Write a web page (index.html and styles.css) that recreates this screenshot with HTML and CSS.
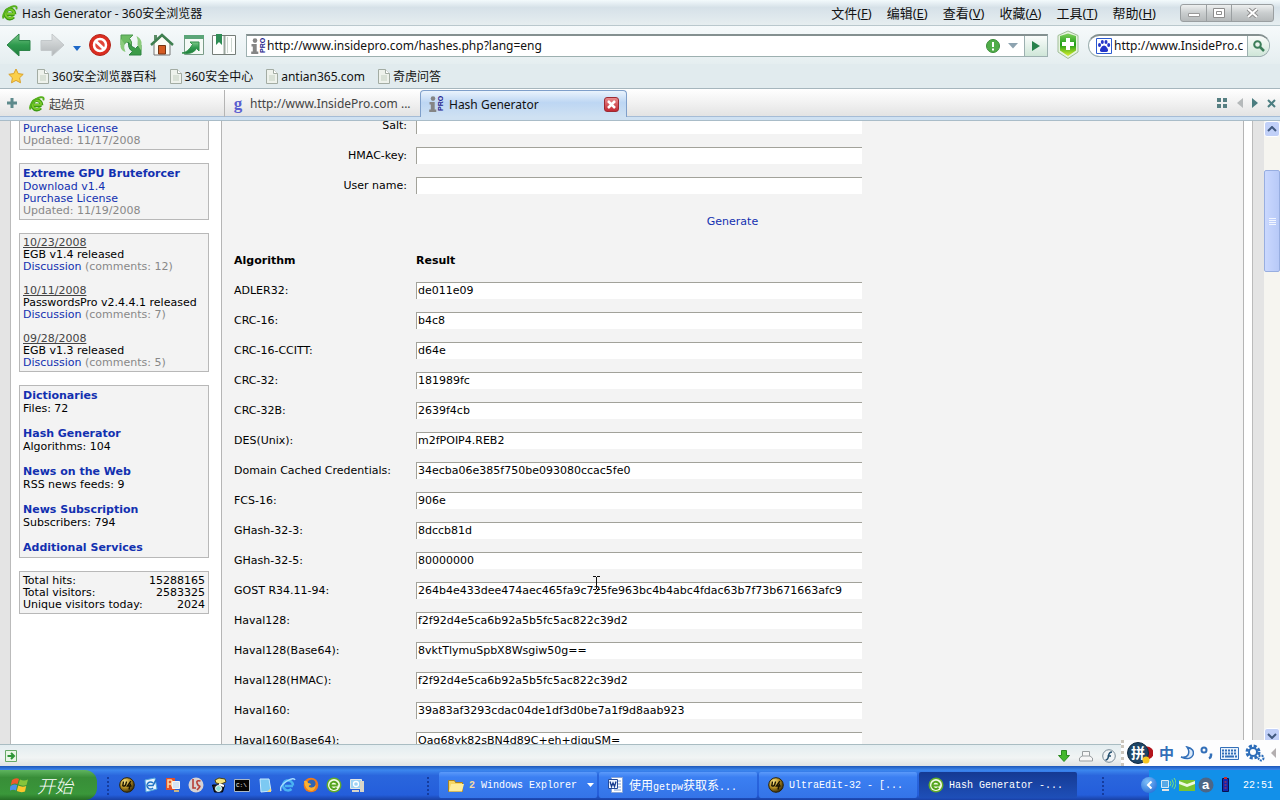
FILE: index.html
```html
<!DOCTYPE html>
<html lang="zh-CN">
  <head>
    <meta charset="utf-8">
    <title>Hash Generator - 360安全浏览器</title>
    <meta name="viewport" content="width=device-width, initial-scale=1.0">
    <link rel="stylesheet" href="styles.css">
  </head>
  <body>
    <!-- shared icons -->
    <svg class="defs" aria-hidden="true">
      <defs>
        <linearGradient id="green" x1="0" y1="0" x2="0" y2="1">
          <stop offset="0" stop-color="#7cc98a"/><stop offset=".5" stop-color="#2f9a4e"/><stop offset="1" stop-color="#1f7e3c"/>
        </linearGradient>
        <linearGradient id="silver" x1="0" y1="0" x2="0" y2="1">
          <stop offset="0" stop-color="#e2e5e6"/><stop offset="1" stop-color="#b0b5b7"/>
        </linearGradient>
        <linearGradient id="shieldFill" x1="0" y1="0" x2="0" y2="1">
          <stop offset="0" stop-color="#7fcf5a"/><stop offset=".5" stop-color="#1e9c17"/><stop offset="1" stop-color="#d9f02c"/>
        </linearGradient>
        <radialGradient id="gold" cx=".35" cy=".3" r=".8">
          <stop offset="0" stop-color="#ffe98a"/><stop offset=".5" stop-color="#b08a20"/><stop offset="1" stop-color="#1c1606"/>
        </radialGradient>
        <symbol id="browser" viewBox="0 0 16 16">
          <path d="M12.6 9.2H4.8M12.6 9.2A4.7 4.7 0 1 0 11.6 11.8" fill="none" stroke="#3d9a12" stroke-width="3.6"/>
          <path d="M12.6 8.9H4.8M12.3 8.6A4.4 4.4 0 1 0 11.3 11.6" fill="none" stroke="#7ccb2c" stroke-width="1.8"/>
          <path d="M1.6 13.6C-.6 10 5 2.6 11.6 1.3c2.8-.5 3.6 1 2.6 3" fill="none" stroke="#56b01c" stroke-width="1.9"/>
        </symbol>
        <symbol id="page" viewBox="0 0 12 15">
          <path d="M.5.5h7l4 4v10H.5z" fill="#eef2ec" stroke="#a3aca3"/>
          <path d="M7.5.5v4h4" fill="#fff" stroke="#a3aca3"/>
          <path d="M3 7h6M3 9h6M3 11h6" stroke="#c3cfc0"/>
        </symbol>
        <symbol id="pro" viewBox="0 0 17 16">
          <circle cx="5" cy="2.6" r="2.3" fill="#858585"/>
          <path d="M1.5 6h5.2v7.5h1.6V16H1.2v-2.5h1.6v-5H1.5z" fill="#858585"/>
          <text x="-15" y="15" transform="rotate(-90)" font-family="Liberation Sans" font-size="7" font-weight="bold" fill="#22228c">PRO</text>
        </symbol>
        <symbol id="ultra" viewBox="0 0 16 16">
          <circle cx="8" cy="8" r="7.3" fill="url(#gold)" stroke="#2a2208"/>
          <path d="M4.5 4.5 3.8 8.6q1.6 1.2 2.8-.6L7.6 4.5M11.8 4.2 8.4 9h4.2M11.6 6.5l-1.6 6" fill="none" stroke="#191300" stroke-width="1.4"/>
        </symbol>
        <symbol id="roundBrowser" viewBox="0 0 16 16">
          <circle cx="8" cy="8" r="7.5" fill="#62ab2a"/><circle cx="8" cy="8" r="6" fill="#f5fbe9"/>
          <path d="M11.6 8.6H5M11.5 8.3a3.6 3.6 0 1 0-.9 2.4" fill="none" stroke="#56a51f" stroke-width="2"/>
        </symbol>
      </defs>
    </svg>

    <header class="titleBar">
      <svg class="icon16"><use href="#browser"/></svg>
      <h1>Hash Generator - 360安全浏览器</h1>
      <nav class="menu">
        <button>文件(<u>F</u>)</button>
        <button>编辑(<u>E</u>)</button>
        <button>查看(<u>V</u>)</button>
        <button>收藏(<u>A</u>)</button>
        <button>工具(<u>T</u>)</button>
        <button>帮助(<u>H</u>)</button>
      </nav>
      <div class="windowButtons">
        <button aria-label="Minimize"><svg width="12" height="10"><path d="M.5 5.5h11v3H.5z" fill="#fff" stroke="#999"/></svg></button>
        <button aria-label="Restore"><svg width="12" height="10"><path d="M.5.5h11v9H.5zM3.5 3.5h5v3h-5z" fill="#fff" stroke="#8d8d8d"/></svg></button>
        <button class="closeWindow" aria-label="Close"><svg width="13" height="10"><path d="m2 1 9 8M11 1 2 9" stroke="#909090" stroke-width="4"/><path d="m2 1 9 8M11 1 2 9" stroke="#fff" stroke-width="2"/></svg></button>
      </div>
    </header>

    <div class="toolBar">
      <div class="navButtons">
        <button aria-label="Back"><svg width="26" height="24"><path d="M1 12 13 1v6.500h11v10H13V23z" fill="url(#green)" stroke="#2c8448"/></svg></button>
        <button aria-label="Forward"><svg width="26" height="24"><path d="M25 12 13 1v6.500H2v10h11V23z" fill="url(#silver)" stroke="#c3c8ca"/></svg></button>
        <button class="history" aria-label="History"><svg width="8" height="6"><path d="M0 0h8L4 5z" fill="#1d68c8"/></svg></button>
        <button aria-label="Stop"><svg width="24" height="24"><circle cx="12" cy="12" r="10.500" fill="#dc2d20" stroke="#b3261b"/><circle cx="12" cy="12" r="6" fill="#e2463a" stroke="#fff" stroke-width="2.500"/><path d="m7.500 8 9 8.500" stroke="#fff" stroke-width="3"/></svg></button>
        <button aria-label="Refresh"><svg width="24" height="24"><path d="M2 2h12l-3.500 3.500Q13.500 8 12.500 14 10.500 9.500 7.500 9L4 12.500 2 12z" fill="#6bbb62" stroke="#4c9a50"/><path d="M22 22H10l3.500-3.500Q9 16 9.500 9.500 12 14 16.500 15.500L20 12h2z" fill="#3c9c48" stroke="#2c8440"/><path d="M1.500 5v9q1 4 5 5Q4.500 15 5.500 11zM22.500 18V9q-1-4-5-6 2 4 1 9z" fill="#8bcb7c"/></svg></button>
        <button aria-label="Home"><svg width="24" height="24"><path d="M4 10 12 3l8 7v12H4z" fill="#fbfbf5" stroke="#777"/><path d="M4 2h3v5H4z" fill="#5b8c66"/><path d="m1 12 11-10 11 10" fill="none" stroke="#3f7f50" stroke-width="2.500"/><path d="M8.500 12.500h7V21h-7z" fill="#d55b22" stroke="#743514"/></svg></button>
        <button aria-label="Reopen tab"><svg width="24" height="24"><path d="M3.500 2.500h19v19h-19z" fill="#f4f9f5" stroke="#7a9c88"/><path d="M3 2h20v4H3z" fill="#5ba578"/><path d="M9 9h9v9l-2.500-2.500Q12 22 1 20q6-.5 10.500-8.500z" fill="url(#green)" stroke="#2f8f49"/></svg></button>
        <button aria-label="Favorites"><svg width="24" height="24"><path d="M.5 2.500h23v19H.5z" fill="#fdfefd" stroke="#757d78"/><path d="M12.500 3v18" stroke="#9aa69e" stroke-width="2"/><path d="M4 1h6v11L7 9l-3 3z" fill="#2e8c55"/><path d="M15.500 4v16M19.500 5v14" stroke="#ccd6cf"/></svg></button>
      </div>
      <form class="addressBar">
        <svg class="iconPro"><use href="#pro"/></svg>
        <input type="text" aria-label="Address" value="http://www.insidepro.com/hashes.php?lang=eng">
        <svg width="16" height="16"><circle cx="8" cy="8" r="6.500" fill="#50ad48" stroke="#3b8d3a"/><path d="M8 4v5M8 10.500v2" stroke="#fff" stroke-width="2"/></svg>
        <button type="button" class="dropArrow" aria-label="Address list"><svg width="10" height="6"><path d="M0 0h10L5 5.500z" fill="#8da3b0"/></svg></button>
        <button type="button" class="goButton" aria-label="Go"><svg width="8" height="10"><path d="M0 0v10l8-5z" fill="#26814a"/></svg></button>
      </form>
      <button class="shield" aria-label="Security"><svg width="24" height="30"><path d="M12 1 22 5.500V22L12 28.500 2 22V5.500z" fill="#e7f4df" stroke="#a0bd98"/><path d="M12 3.500 20 6v14.500L12 26l-8-5.500V6z" fill="url(#shieldFill)"/><path d="M12 8v12M6 14h12" stroke="#fff" stroke-width="4"/></svg></button>
      <form class="searchBar">
        <svg width="16" height="16"><path d="M.5.5h15v15H.5z" fill="#fff" stroke="#2b5ad0"/><g fill="#2536c9"><ellipse cx="3.500" cy="7" rx="1.500" ry="2"/><ellipse cx="6.300" cy="4" rx="1.500" ry="2"/><ellipse cx="10" cy="4" rx="1.500" ry="2"/><ellipse cx="12.700" cy="7" rx="1.500" ry="2"/><path d="M8 7.500q2 0 3.500 3 1.500 3-1 3.500H5.500q-2.500-.5-1-3.500 1.500-3 3.500-3z"/></g></svg>
        <input type="text" aria-label="Search" value="http://www.InsidePro.com">
        <button type="button" aria-label="Search"><svg width="12" height="12"><circle cx="4.500" cy="4.500" r="3.300" fill="none" stroke="#3b7d58" stroke-width="2"/><path d="m7 7 4 4" stroke="#3b7d58" stroke-width="2.500"/></svg></button>
      </form>
    </div>

    <nav class="bookmarks">
      <svg class="icon16" viewBox="0 0 16 16"><path d="m8 1 2.200 4.600 5 .7-3.600 3.500.9 5L8 12.400l-4.500 2.400.9-5L.8 6.300l5-.7z" fill="#fbd04a" stroke="#d9a12c"/></svg>
      <a href="#"><svg class="page"><use href="#page"/></svg>360安全浏览器百科</a>
      <a href="#"><svg class="page"><use href="#page"/></svg>360安全中心</a>
      <a href="#"><svg class="page"><use href="#page"/></svg>antian365.com</a>
      <a href="#"><svg class="page"><use href="#page"/></svg>奇虎问答</a>
    </nav>

    <div class="tabStrip">
      <button class="newTab" aria-label="New tab"><svg width="12" height="12"><path d="M6 1v10M1 6h10" stroke="#5e8a8c" stroke-width="3"/></svg></button>
      <a href="#" class="tab"><svg class="icon16"><use href="#browser"/></svg><span>起始页</span></a>
      <a href="#" class="tab"><b class="google">g</b><span>http://www.InsidePro.com ...</span></a>
      <div class="tab activeTab">
        <svg class="iconPro"><use href="#pro"/></svg><span>Hash Generator</span>
        <button class="closeTab" aria-label="Close tab"><svg width="9" height="9"><path d="m1 1 7 7M8 1 1 8" stroke="#fff" stroke-width="2.500"/></svg></button>
      </div>
      <div class="tabTools">
        <button aria-label="Tab list"><svg width="11" height="10"><path d="M0 0h4v4H0zM6 0h4v4H6zM0 6h4v4H0zM6 6h4v4H6z" fill="#567f82"/></svg></button>
        <button aria-label="Scroll left"><svg width="6" height="10"><path d="M6 0v10L0 5z" fill="#b5b9ba"/></svg></button>
        <button aria-label="Scroll right"><svg width="6" height="10"><path d="M0 0v10l6-5z" fill="#4b7d80"/></svg></button>
        <button aria-label="Close current"><svg width="9" height="9"><path d="m1 1 7 7M8 1 1 8" stroke="#4b7d80" stroke-width="2"/></svg></button>
      </div>
    </div>

    <div class="viewport">
      <div class="site">
        <aside class="sideBar">
          <div class="box">
            <a href="#">Purchase License</a>
            <p class="muted">Updated: 11/17/2008</p>
          </div>
          <div class="box">
            <h2><a href="#">Extreme GPU Bruteforcer</a></h2>
            <a href="#">Download v1.4</a>
            <a href="#">Purchase License</a>
            <p class="muted">Updated: 11/19/2008</p>
          </div>
          <div class="box news">
            <div><u>10/23/2008</u><p>EGB v1.4 released</p><p class="muted"><a href="#">Discussion</a> (comments: 12)</p></div>
            <div><u>10/11/2008</u><p>PasswordsPro v2.4.4.1 released</p><p class="muted"><a href="#">Discussion</a> (comments: 7)</p></div>
            <div><u>09/28/2008</u><p>EGB v1.3 released</p><p class="muted"><a href="#">Discussion</a> (comments: 5)</p></div>
          </div>
          <div class="box news">
            <div><h2><a href="#">Dictionaries</a></h2><p>Files: 72</p></div>
            <div><h2><a href="#">Hash Generator</a></h2><p>Algorithms: 104</p></div>
            <div><h2><a href="#">News on the Web</a></h2><p>RSS news feeds: 9</p></div>
            <div><h2><a href="#">News Subscription</a></h2><p>Subscribers: 794</p></div>
            <div><h2><a href="#">Additional Services</a></h2></div>
          </div>
          <table class="box counters">
            <tr><td>Total hits:</td><td>15288165</td></tr>
            <tr><td>Total visitors:</td><td>2583325</td></tr>
            <tr><td>Unique visitors today:</td><td>2024</td></tr>
          </table>
        </aside>

        <main class="generator">
          <div class="field"><label for="salt">Salt:</label><input id="salt" type="text"></div>
          <div class="field"><label for="hmac">HMAC-key:</label><input id="hmac" type="text"></div>
          <div class="field"><label for="user">User name:</label><input id="user" type="text"></div>
          <a href="#" class="generate">Generate</a>
          <table class="results">
            <tr><th>Algorithm</th><th>Result</th></tr>
            <tr><td><label for="r1">ADLER32:</label></td><td><input id="r1" type="text" value="de011e09"></td></tr>
            <tr><td><label for="r2">CRC-16:</label></td><td><input id="r2" type="text" value="b4c8"></td></tr>
            <tr><td><label for="r3">CRC-16-CCITT:</label></td><td><input id="r3" type="text" value="d64e"></td></tr>
            <tr><td><label for="r4">CRC-32:</label></td><td><input id="r4" type="text" value="181989fc"></td></tr>
            <tr><td><label for="r5">CRC-32B:</label></td><td><input id="r5" type="text" value="2639f4cb"></td></tr>
            <tr><td><label for="r6">DES(Unix):</label></td><td><input id="r6" type="text" value="m2fPOIP4.REB2"></td></tr>
            <tr><td><label for="r7">Domain Cached Credentials:</label></td><td><input id="r7" type="text" value="34ecba06e385f750be093080ccac5fe0"></td></tr>
            <tr><td><label for="r8">FCS-16:</label></td><td><input id="r8" type="text" value="906e"></td></tr>
            <tr><td><label for="r9">GHash-32-3:</label></td><td><input id="r9" type="text" value="8dccb81d"></td></tr>
            <tr><td><label for="r10">GHash-32-5:</label></td><td><input id="r10" type="text" value="80000000"></td></tr>
            <tr><td><label for="r11">GOST R34.11-94:</label></td><td><input id="r11" type="text" value="264b4e433dee474aec465fa9c725fe963bc4b4abc4fdac63b7f73b671663afc9"></td></tr>
            <tr><td><label for="r12">Haval128:</label></td><td><input id="r12" type="text" value="f2f92d4e5ca6b92a5b5fc5ac822c39d2"></td></tr>
            <tr><td><label for="r13">Haval128(Base64):</label></td><td><input id="r13" type="text" value="8vktTlymuSpbX8Wsgiw50g=="></td></tr>
            <tr><td><label for="r14">Haval128(HMAC):</label></td><td><input id="r14" type="text" value="f2f92d4e5ca6b92a5b5fc5ac822c39d2"></td></tr>
            <tr><td><label for="r15">Haval160:</label></td><td><input id="r15" type="text" value="39a83af3293cdac04de1df3d0be7a1f9d8aab923"></td></tr>
            <tr><td><label for="r16">Haval160(Base64):</label></td><td><input id="r16" type="text" value="Oag68yk82sBN4d89C+eh+diquSM="></td></tr>
          </table>
        </main>
      </div>
      <div class="scrollBar">
        <button aria-label="Scroll up"><svg width="10" height="6"><path d="m1 5 4-4 4 4" fill="none" stroke="#41597f" stroke-width="2"/></svg></button>
        <div class="thumb"><i></i><i></i><i></i><i></i></div>
        <button aria-label="Scroll down"><svg width="10" height="6"><path d="m1 1 4 4 4-4" fill="none" stroke="#41597f" stroke-width="2"/></svg></button>
      </div>
      <svg class="cursor" width="7" height="14"><path d="M0 .5h3M4 .5h3M3.500 1v12M0 13.500h3M4 13.500h3" stroke="#111"/></svg>
    </div>

    <footer class="statusBar">
      <svg width="12" height="12"><path d="M.5.5h11v11H.5z" fill="#eaf6e6" stroke="#68a968"/><path d="M2.500 6H8M6 3l3 3-3 3" fill="none" stroke="#2f9636" stroke-width="2"/></svg>
      <div class="statusIcons">
        <svg width="12" height="12"><path d="M3.500.5h5v5h3L6 11.500.5 5.500h3z" fill="#43b82c" stroke="#2a8a20"/></svg>
        <svg width="14" height="12"><path d="M3.500 6V1.500h7V6M3 6 .5 8v3h13V8L11 6z" fill="#f6f6f6" stroke="#9a9fa1"/></svg>
        <svg width="14" height="14"><circle cx="7" cy="7" r="6.300" fill="#f1f4f6" stroke="#788a96"/><path d="M10 3Q7 3 6.500 7T3.500 11M5.500 7H9" fill="none" stroke="#24506f" stroke-width="1.600"/></svg>
      </div>
    </footer>

    <div class="taskBar">
      <button class="start"><svg width="20" height="18"><path d="M2 4q4-3 7-1L7.500 8Q4 6.500.8 9z" fill="#ee5a2b"/><path d="M10 3.500q4 2 8 0L16.500 9q-4 1.500-8-.5z" fill="#86c53b"/><path d="M.5 10q3-2.500 6.700-1L6 14.500Q3 13-.8 15z" fill="#4d90ea"/><path d="M8.200 9.500q4 2 8 .5L15 15.500q-4 1.500-8.200-.5z" fill="#fcc72c"/></svg>开始</button>
      <span class="grip"></span>
      <div class="quickLaunch">
        <svg><use href="#ultra"/></svg>
        <svg><path d="M3 3 13 1l2 11-11 3z" fill="#e8f5ff" stroke="#4fa2dc"/><path d="M11 6a3.500 3.500 0 1 0 0 5M6 8.500h5L14 3" fill="none" stroke="#2173c4" stroke-width="1.600"/></svg>
        <svg><path d="M1 1h9v12H1z" fill="#e0502a"/><path d="M3 11V3h3q2 1 0 4H3M6 7l2 4" fill="none" stroke="#ffd9a0" stroke-width="1.500"/><path d="M7.500 4.500h7v7h-7z" fill="#d3e4f4" stroke="#f4f4f4"/><path d="M9 13h5v2H9z" fill="#c8b383"/></svg>
        <svg><circle cx="8" cy="8" r="7.500" fill="#d8d3d4"/><path d="M5 2v9h3M12.500 4Q8 3 9 6t2.500 3-2.500 4" fill="none" stroke="#b73e35" stroke-width="1.600"/></svg>
        <svg><path d="m4 3 4-2 6 1 1 3-5 2-5-1z" fill="#f3e37e" stroke="#4d4413"/><path d="M1.500 8h12l-2 7h-8z" fill="#24272a" stroke="#000"/><circle cx="7.500" cy="11.500" r="3" fill="#8ee0d8" stroke="#fff"/><path d="m8 7 5 2" stroke="#fff" stroke-width="2"/></svg>
        <svg><path d="M.5 2.500h15v12H.5z" fill="#050505" stroke="#aab8c8"/><text x="2" y="10" font-family="Liberation Mono" font-size="6" fill="#fff">C:\</text></svg>
        <svg><path d="M3 2h9l2 12-10 1z" fill="#7cc9f2" stroke="#c6eaff"/><path d="m10 15 4-4v4z" fill="#f6d77a"/></svg>
        <svg><path d="M13 9H5M13 8.500a5 5 0 1 0-1.500 3.500" fill="none" stroke="#4ab2f2" stroke-width="2.500"/><path d="M1 14Q-1 9 7 4q7-4 8-1" fill="none" stroke="#a6dcff" stroke-width="1.400"/></svg>
        <svg><circle cx="8" cy="8" r="7.300" fill="#ed7b1c"/><circle cx="8.500" cy="6.800" r="4" fill="#2f64b3"/><path d="M1 4q3-1 4 2 3 0 3 2-3 0-2 2 4 2 7-2-1 6-5 6Q2 13 1 4z" fill="#f9b233"/></svg>
        <svg><use href="#roundBrowser"/></svg>
        <svg><path d="M1.500 2.500h11v9h-11z" fill="#9cd3f4" stroke="#e4e7e5"/><circle cx="7" cy="7" r="2.500" fill="none" stroke="#fff" stroke-width="1.300"/><path d="M11 4h4v11h-4z" fill="#d8d5c8"/><path d="M3 13h7v2H3z" fill="#d8d5c8"/></svg>
      </div>
      <span class="grip"></span>
      <div class="tasks">
        <button class="task"><svg class="icon16"><path d="M.5 3.500h6l1 2h7v9H.5z" fill="#f6d663" stroke="#a98220"/><path d="M3 7h13l-2 7.500H1z" fill="#fdec9b"/></svg><span class="taskText"><b class="count">2</b> Windows Explorer</span><svg width="7" height="4"><path d="M0 0h7L3.500 4z" fill="#fff"/></svg></button>
        <button class="task"><svg class="icon16"><path d="M3.500.5h11v15h-11z" fill="#fff" stroke="#8aa5d4"/><path d="M9 4h4M9 7h4M9 10h4M6 13h7" stroke="#7c9ed6"/><path d="M.5 2.500h9v9h-9z" fill="#eef4ff" stroke="#244b9b"/><path d="m2 4.500 1.500 5L5 6l1.500 3.500L8 4.500" fill="none" stroke="#173c8e" stroke-width="1.300"/></svg><span class="taskText"><em>使用</em>getpw<em>获取系</em>...</span></button>
        <button class="task"><svg class="icon16"><use href="#ultra"/></svg><span class="taskText">UltraEdit-32 - [...</span></button>
        <button class="task activeTask"><svg class="icon16"><use href="#roundBrowser"/></svg><span class="taskText">Hash Generator -...</span></button>
      </div>
      <span class="grip trayGrip"></span>
      <div class="tray">
        <button class="expand" aria-label="Show hidden icons"><svg width="7" height="8"><path d="M5.500.5 2 4l3.500 3.500" fill="none" stroke="#fff" stroke-width="2"/></svg></button>
        <svg><path d="M1.500 3.500h7v7h-7z" fill="#57a9e6" stroke="#d5e8f5"/><path d="M2 13h7" stroke="#e3e3e3" stroke-width="2"/><path d="M10 4q2 2 0 5M12 2.500q3 4 0 8M14 1q4 5 0 11" fill="none" stroke="#7ce07a"/></svg>
        <svg><path d="M0 3h16v11H0z" fill="#7ac231"/><path d="m0 4 8 3 8-3v3l-8 3-8-3z" fill="#eef9df"/></svg>
        <svg><circle cx="8" cy="8" r="7.500" fill="#4d6686"/><text x="4" y="12" font-family="Liberation Sans" font-size="13" font-weight="bold" fill="#fff">a</text></svg>
        <svg><path d="M5.500 1.500h6v13h-6z" fill="#1527ad" stroke="#08104f"/><path d="M7 0h3v2H7z" fill="#cc2929"/><path d="M7.500 5h2M7.500 8h2M7.500 11h2" stroke="#e03030"/></svg>
        <time>22:51</time>
      </div>
    </div>

    <!-- input method bar floating over the status bar -->
    <div class="imeBar">
      <svg width="26" height="24"><circle cx="20" cy="12" r="6.500" fill="#b3131b"/><circle cx="11" cy="12" r="10.500" fill="#1f4667" stroke="#10293f"/><text x="4" y="17" font-family="Noto Sans CJK SC" font-size="14" font-weight="bold" fill="#fff">拼</text><circle cx="19" cy="19" r="3.500" fill="#f5c620"/></svg>
      <b>中</b>
      <svg width="14" height="14"><path d="M7 1q8 2 6 8-3 6-12 2 5 1 7-2 2-4-1-8z" fill="#dceafa" stroke="#336fb8" stroke-width="1.500"/></svg>
      <svg width="14" height="14"><circle cx="4" cy="4" r="2.500" fill="none" stroke="#336fb8" stroke-width="2"/><path d="M11 7.500v2q0 2-2 3" fill="none" stroke="#336fb8" stroke-width="2.500"/></svg>
      <svg width="19" height="13"><path d="M.5.5h18v12H.5z" fill="#e9f2fc" stroke="#336fb8"/><path d="M2 3.500h15M2 6.500h15" stroke="#336fb8" stroke-width="2" stroke-dasharray="2 1"/><path d="M2 9.500h2M5 9.500h9M15 9.500h2" stroke="#336fb8" stroke-width="2"/></svg>
      <svg width="20" height="18"><circle cx="8" cy="8" r="6" fill="none" stroke="#2b6cb9" stroke-width="3" stroke-dasharray="3 1.700"/><circle cx="8" cy="8" r="4" fill="none" stroke="#2b6cb9" stroke-width="2"/><circle cx="16" cy="14" r="2.500" fill="none" stroke="#2b6cb9" stroke-width="2" stroke-dasharray="2 1"/></svg>
      <svg width="5" height="10"><path d="M5 0v10L0 5z" fill="#b3aeb0"/></svg>
    </div>
  </body>
</html>
```
FILE: styles.css
```css
* {
  box-sizing: border-box;
}

body {
  display: flex;
  flex-direction: column;
  height: 100vh;
  margin: 0;
  overflow: hidden;
  font-family: "Noto Sans", "Noto Sans CJK SC", sans-serif;
  font-size: 12px;
  color: #111;
  background-color: #e1ebee;
}

button {
  display: flex;
  align-items: center;
  justify-content: center;
  padding: 0;
  border: 0;
  background: none;
  font: inherit;
  color: inherit;
}

input {
  min-width: 0;
  padding: 0;
  border: 0;
  outline: 0;
  background: none;
  font: inherit;
  color: inherit;
}

a {
  text-decoration: none;
  color: inherit;
}

svg {
  flex: none;
}

.defs {
  position: absolute;
  width: 0;
  height: 0;
}

.icon16 {
  width: 16px;
  height: 16px;
}

.iconPro {
  width: 17px;
  height: 16px;
}

/* ===== Title bar ===== */
.titleBar {
  display: flex;
  flex: none;
  align-items: center;
  height: 26px;
  padding: 0 6px 0 2px;
  border-bottom: 1px solid #b9c8cd;
  background: linear-gradient(#f3fafc, #d6e1e8 30%, #e6eef0);
}

h1 {
  flex: 1;
  margin: 0 0 0 4px;
  font-size: 12px;
  font-weight: normal;
}

.menu {
  display: flex;
  gap: 15px;
  margin-right: 24px;
  font-size: 13px;
}

.windowButtons {
  display: flex;
  height: 18px;
  border: 1px solid #9a9fa1;
  border-radius: 3px;
  background: linear-gradient(#eef0f0, #c9cdce 50%, #b5b9ba);
}

.windowButtons button {
  width: 25px;
}

.windowButtons button + button {
  border-left: 1px solid #9a9fa1;
}

.windowButtons .closeWindow {
  width: 42px;
}

/* ===== Tool bar ===== */
.toolBar {
  display: flex;
  flex: none;
  align-items: center;
  height: 38px;
  padding: 0 10px 0 6px;
  background: linear-gradient(#f6fafb, #e5eef0);
}

.navButtons {
  display: flex;
  align-items: center;
  gap: 7px;
  margin-right: 10px;
}

.navButtons .history {
  width: 9px;
  padding-top: 8px;
}

.addressBar {
  display: flex;
  flex: 1;
  align-items: center;
  height: 23px;
  padding-left: 3px;
  border: 1px solid #9db0b0;
  border-top: 2px solid #849090;
  background-color: #fff;
}

.addressBar input {
  flex: 1;
  font-size: 12px;
}

.dropArrow {
  width: 23px;
}

.goButton {
  width: 23px;
  height: 20px;
  border-left: 1px solid #9db0b0;
  background: linear-gradient(#fafcfb, #cfe6d8);
}

.shield {
  margin: 0 8px;
}

.searchBar {
  display: flex;
  align-items: center;
  width: 182px;
  height: 23px;
  padding-left: 7px;
  overflow: hidden;
  border: 1px solid #9db0b0;
  border-top: 2px solid #849090;
  border-radius: 12px;
  background-color: #fff;
}

.searchBar input {
  flex: 1;
  margin: 0 4px 0 2px;
}

.searchBar button {
  width: 22px;
  height: 20px;
  border-left: 1px solid #9db0b0;
  background: linear-gradient(#fafcfb, #cfe6d8);
}

/* ===== Bookmarks ===== */
.bookmarks {
  display: flex;
  flex: none;
  align-items: center;
  gap: 13px;
  height: 25px;
  padding: 0 8px;
  border-bottom: 1px solid #a6b6bd;
  background-color: #e1ebee;
}

.bookmarks a {
  display: flex;
  align-items: center;
  gap: 3px;
}

.page {
  width: 12px;
  height: 15px;
}

/* ===== Tabs ===== */
.tabStrip {
  display: flex;
  flex: none;
  align-items: flex-end;
  height: 31px;
  border-bottom: 3px solid #cfe1f2;
  background: linear-gradient(#fff, #f4f4f4 40%, #e2e2e2);
  box-shadow: inset 0 -1px #a5bcd6;
}

.newTab {
  width: 24px;
  height: 28px;
}

.tab {
  display: flex;
  align-items: center;
  gap: 4px;
  width: 200px;
  height: 27px;
  padding: 0 5px;
  overflow: hidden;
  white-space: nowrap;
  color: #444;
}

.tab + .tab {
  width: 196px;
  border-left: 1px solid #b4b4b4;
}

.tab + .activeTab {
  width: 207px;
  padding: 0 7px;
  border: 1px solid #7f9fca;
  border-bottom: 0;
  border-radius: 4px 4px 0 0;
  background: linear-gradient(#eaf3fd, #bdd6f3 45%, #cfe1f2);
  color: #111;
}

.google {
  width: 16px;
  text-align: center;
  font-family: "Liberation Serif", serif;
  font-size: 17px;
  line-height: 16px;
  color: #5a5fd0;
}

.closeTab {
  width: 15px;
  height: 15px;
  margin-left: auto;
  border: 1px solid #9c2a32;
  border-radius: 3px;
  background: linear-gradient(#e88a8c, #c22832);
}

.tabTools {
  display: flex;
  align-items: center;
  gap: 9px;
  height: 28px;
  margin-left: auto;
  padding-right: 4px;
}

/* ===== Web page ===== */
.viewport {
  position: relative;
  display: flex;
  flex: 1;
  min-height: 0;
  overflow: hidden;
  border-top: 1px solid #a9bcc8;
  background: #e4e4e4;
  font-family: "DejaVu Sans", sans-serif;
  font-size: 11px;
  color: #000;
}

.site {
  display: flex;
  flex: 1;
  margin: 0 11px 0 10px;
  padding-right: 8px;
  border: solid #bbb;
  border-width: 0 1px;
  background-color: #fff;
}

.site a {
  color: #1230b0;
}

.sideBar {
  display: flex;
  flex: none;
  flex-direction: column;
  gap: 13px;
  width: 210px;
  padding: 0 12px 0 8px;
  line-height: 12px;
}

.box {
  padding: 3px 3px 2px;
  border: 1px solid #b8b8b8;
  background-color: #f3f3f3;
}

.box:first-child {
  border-top: 0;
  padding-top: 2px;
}

.box > a {
  display: block;
}

.box h2 {
  margin: 0;
  font-size: 11px;
  line-height: 14px;
}

.box p {
  margin: 0;
  white-space: nowrap;
}

.box .muted {
  color: #888;
}

.box u {
  color: #444;
}

.news {
  display: flex;
  flex-direction: column;
  gap: 12px;
}

.counters {
  width: 100%;
  border-spacing: 0;
}

.counters td {
  padding: 0;
}

.counters td + td {
  text-align: right;
}

/* The form starts above the visible area */
.generator {
  flex: 1;
  margin-top: -11px;
  padding-left: 12px;
  border: solid #b5b5b5;
  border-width: 0 1px;
  background-color: #f3f3f3;
}

.field {
  display: flex;
  align-items: center;
  height: 30px;
}

.field label {
  width: 182px;
  padding-right: 9px;
  text-align: right;
}

.field input,
.results input {
  display: block;
  width: 446px;
  height: 17px;
  padding-left: 1px;
  border: solid #a2a29a;
  border-width: 1px 0 0 1px;
  background-color: #fff;
}

.generate {
  display: block;
  margin: 7px 12px 8px 0;
  text-align: center;
  line-height: 30px;
}

.results {
  border-collapse: collapse;
}

.results th,
.results td {
  height: 30px;
  padding: 0;
  text-align: left;
}

.results th:first-child {
  width: 182px;
}

.scrollBar {
  display: flex;
  flex-direction: column;
  width: 16px;
  background-color: #f6f5f0;
}

.scrollBar button {
  height: 16px;
  border: 1px solid #fff;
  border-radius: 3px;
  background-color: #c1d0f8;
}

.scrollBar button:last-child {
  margin-top: auto;
}

.thumb {
  display: flex;
  flex-direction: column;
  align-items: center;
  justify-content: center;
  gap: 1px;
  height: 102px;
  margin-top: 33px;
  border: 1px solid #98aee0;
  border-radius: 2px;
  background: linear-gradient(to right, #cad8fe, #b7c9f7);
}

.thumb i {
  width: 7px;
  height: 1px;
  background-color: #f2f6ff;
}

/* Mouse pointer resting on the page */
.cursor {
  position: absolute;
  left: 593px;
  top: 455px;
}

/* ===== Status bar ===== */
.statusBar {
  display: flex;
  flex: none;
  align-items: center;
  justify-content: space-between;
  height: 22px;
  padding: 0 164px 0 5px;
  border-top: 1px solid #a9bcc2;
  background: linear-gradient(#e3edf0, #f1f4f4 60%, #dfe3e4);
}

.statusIcons {
  display: flex;
  align-items: center;
  gap: 9px;
}

.imeBar {
  position: absolute;
  right: 0;
  bottom: 34px;
  display: flex;
  align-items: center;
  justify-content: space-between;
  width: 159px;
  height: 26px;
  padding: 0 4px 0 3px;
  border-left: 3px dotted #ccc6bc;
  background-color: #fdfdfe;
}

.imeBar b {
  font-size: 15px;
  line-height: 20px;
  color: #336fb8;
}

/* ===== Task bar ===== */
.taskBar {
  display: flex;
  flex: none;
  align-items: flex-end;
  height: 34px;
  background: linear-gradient(#1d56b8, #3c87ee 12%, #2a66dd 28%, #245edb 85%, #1941a5);
  color: #fff;
}

.start {
  gap: 7px;
  width: 97px;
  height: 30px;
  padding-right: 14px;
  border-radius: 0 12px 12px 0;
  background: linear-gradient(#5fb45f, #388e38 25%, #3a973a 80%, #256e25);
  font-family: "Noto Sans CJK SC", sans-serif;
  font-size: 18px;
  font-style: italic;
  font-weight: 300;
  line-height: 20px;
}

.grip {
  width: 4px;
  height: 20px;
  margin: 0 9px 4px;
  background: radial-gradient(circle, #153c9e 1px, transparent 1px) 0 0 / 4px 4px;
}

.quickLaunch {
  display: flex;
  align-items: center;
  gap: 7px;
  width: 298px;
  height: 30px;
}

.quickLaunch svg,
.tray > svg {
  width: 16px;
  height: 16px;
}

.tasks {
  display: flex;
  flex: 0 1 640px;
  gap: 2px;
  height: 28px;
  padding-bottom: 2px;
}

.task {
  flex: 0 1 158px;
  justify-content: flex-start;
  gap: 5px;
  min-width: 0;
  padding: 0 3px 0 9px;
  border-radius: 2px;
  background: linear-gradient(#5b9afa, #3b7ff2 20%, #3474e8);
}

.activeTask {
  background: linear-gradient(#153a93, #1e4fb8);
}

.taskText {
  flex: 1;
  text-align: left;
  white-space: nowrap;
  font-family: "Liberation Mono", monospace;
  font-size: 10px;
}

.taskText em {
  font-family: "Noto Sans CJK SC", sans-serif;
  font-size: 12px;
  font-style: normal;
  line-height: 14px;
}

.count {
  color: #f3d9a4;
}

.trayGrip {
  margin-left: 22px;
}

.tray {
  display: flex;
  align-items: center;
  gap: 3px;
  width: 139px;
  height: 30px;
  margin-left: auto;
  background: linear-gradient(to right, transparent 8px, #1290e9 8px);
}

.expand {
  width: 16px;
  height: 16px;
  border-radius: 8px;
  background: radial-gradient(circle at 40% 30%, #7fc0fa, #1860d0);
}

.tray time {
  flex: 1;
  text-align: center;
  font-family: "Liberation Mono", monospace;
  font-size: 10px;
}
```
